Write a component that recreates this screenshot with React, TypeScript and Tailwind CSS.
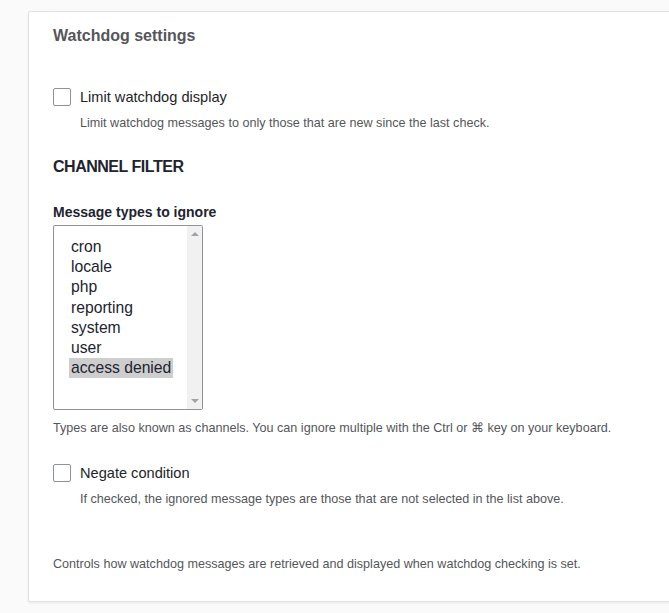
import React from "react";

const options = ["cron", "locale", "php", "reporting", "system", "user", "access denied"];

const Checkbox = ({ label }: { label: string }) => (
  <label className="flex items-center h-5 gap-[9px]">
    <span className="w-[18px] h-[18px] rounded-[2px] border border-[#8e929c] bg-white" />
    <span className="text-[14.6px] leading-5 text-[#232429]">{label}</span>
  </label>
);

const App = () => {
  return (
    <div
      className="min-h-[613px] bg-[#fafafa] overflow-hidden pt-[11px] pl-[28px]"
      style={{ fontFamily: '"Liberation Sans", Arial, sans-serif' }}
    >
      <div className="w-[680px] bg-white border border-[#e3e3e6] rounded-[2px] shadow-[0_1px_3px_rgba(0,0,0,0.08)] pl-6 pt-3 pb-[28px]">
        <h2 className="text-[16px] leading-6 font-bold text-[#55565b]">Watchdog settings</h2>

        <div className="mt-[39px]">
          <Checkbox label="Limit watchdog display" />
          <p className="mt-[7px] ml-[27px] text-[12.6px] leading-[18px] text-[#55565b]">
            Limit watchdog messages to only those that are new since the last check.
          </p>
        </div>

        <h3 className="mt-[23px] text-[16px] tracking-[-0.03em] leading-6 font-bold text-[#222330]">
          CHANNEL FILTER
        </h3>

        <div className="mt-[23px] text-[14px] leading-5 font-bold text-[#222330]">
          Message types to ignore
        </div>

        <div className="mt-[3px] w-[150px] h-[185px] border border-[#919297] rounded-[2px] flex bg-white">
          <ul className="flex-1 pl-[15px] pt-[11px]">
            {options.map((o) => (
              <li
                key={o}
                className={`text-[15.7px] leading-[20.2px] px-[2px] w-fit text-[#222330] ${
                  o === "access denied" ? "bg-[#cecece]" : ""
                }`}
              >
                {o}
              </li>
            ))}
          </ul>
          <div className="w-[15px] bg-[#f1f1f1] flex flex-col justify-between items-center py-[6px]">
            <span className="w-0 h-0 border-l-[4px] border-r-[4px] border-b-[4px] border-l-transparent border-r-transparent border-b-[#a3a3a3]" />
            <span className="w-0 h-0 border-l-[4px] border-r-[4px] border-t-[4px] border-l-transparent border-r-transparent border-t-[#a3a3a3]" />
          </div>
        </div>

        <p className="mt-[9px] text-[12.6px] leading-[18px] text-[#55565b]">
          Types are also known as channels. You can ignore multiple with the Ctrl or ⌘ key on your keyboard.
        </p>

        <div className="mt-[26px]">
          <Checkbox label="Negate condition" />
          <p className="mt-[7px] ml-[27px] text-[12.6px] leading-[18px] text-[#55565b]">
            If checked, the ignored message types are those that are not selected in the list above.
          </p>
        </div>

        <p className="mt-[47px] text-[12.6px] leading-[18px] text-[#55565b]">
          Controls how watchdog messages are retrieved and displayed when watchdog checking is set.
        </p>
      </div>
    </div>
  );
};

export default App;
